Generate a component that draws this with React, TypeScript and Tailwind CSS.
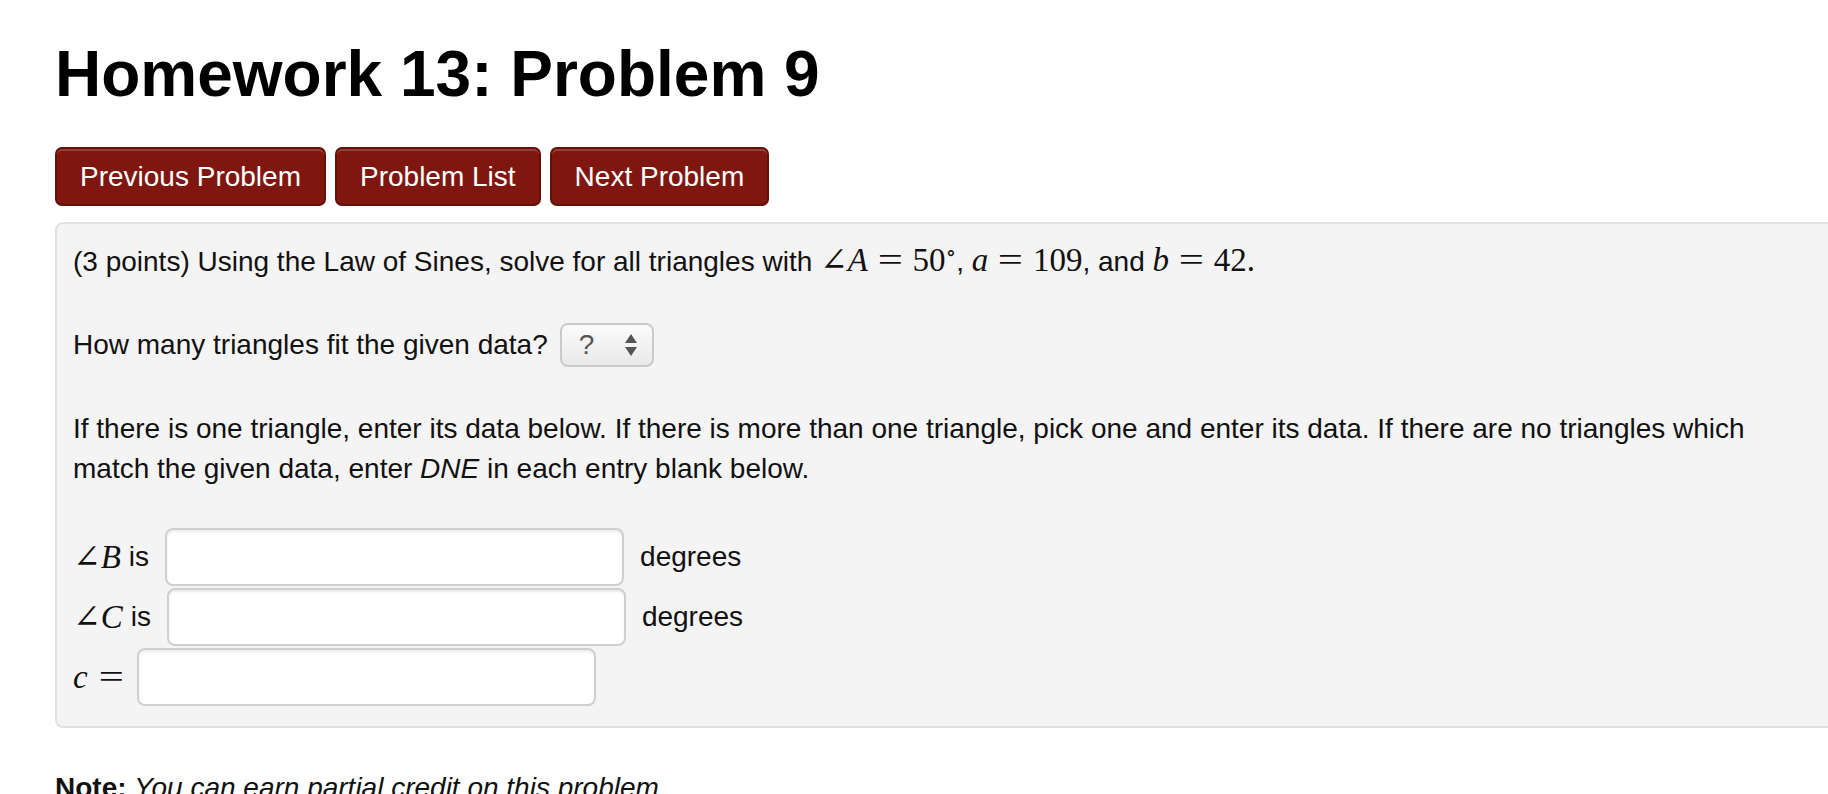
import React from 'react';

const math = "font-['Liberation_Serif','DejaVu_Serif',serif] text-[33px] leading-none";

const Eq: React.FC = () => (
  <span className="mx-[13px] inline-block scale-x-[1.35] font-['Liberation_Serif','DejaVu_Serif',serif]">=</span>
);

const AnswerBox: React.FC<{ className?: string }> = ({ className = '' }) => (
  <input
    type="text"
    className={`h-[58px] w-[459px] rounded-[8px] border-2 border-[#cfcfcf] bg-white px-3 shadow-[inset_0_2px_2px_rgba(0,0,0,0.08)] outline-none ${className}`}
  />
);

const App: React.FC = () => {
  const buttons = ['Previous Problem', 'Problem List', 'Next Problem'];

  return (
    <div className="min-h-[794px] w-full overflow-hidden bg-white font-['Liberation_Sans',Arial,sans-serif] text-[28px] leading-[40px] text-[#111]">
      <div className="pl-[55px] pt-[39px]">
        <h1 className="text-[64px] font-bold leading-[70px] text-black">Homework 13: Problem 9</h1>

        {/* Problem navigation */}
        <div className="mt-[38px] flex gap-[9px]">
          {buttons.map((b) => (
            <button
              key={b}
              className="flex h-[59px] items-center rounded-[7px] border-2 border-[#651009] bg-[#7f1710] px-[23px] text-[28px] text-white shadow-[inset_0_2px_0_rgba(255,255,255,0.18)]"
            >
              {b}
            </button>
          ))}
        </div>

        {/* Problem body */}
        <div className="mt-[16px] w-[1840px] rounded-[8px] border-2 border-[#e1e1e1] bg-[#f4f4f4] pb-[20px] pl-[16px] pr-[102px] pt-[18px]">
          <p className="h-[40px] whitespace-nowrap">
            (3 points) Using the Law of Sines, solve for all triangles with{' '}
            <span className={math}>
              ∠<i>A</i>
              <Eq />
              50<sup className="text-[22px]">∘</sup>
            </span>
            ,{' '}
            <span className={math}>
              <i>a</i>
              <Eq />
              109
            </span>
            , and{' '}
            <span className={math}>
              <i>b</i>
              <Eq />
              42.
            </span>
          </p>

          <div className="mt-[41px] flex h-[44px] items-center">
            <span>How many triangles fit the given data?</span>
            <span className="ml-[12px] flex h-[44px] w-[94px] items-center justify-between rounded-[8px] border-2 border-[#cacaca] bg-gradient-to-b from-[#fbfbfb] to-[#e9e9e9] pl-[17px] pr-[14px] text-[#555]">
              <span>?</span>
              <svg width="14" height="24" viewBox="0 0 14 24" fill="#555">
                <path d="M7 1 L13 10 L1 10 Z" />
                <path d="M7 23 L13 14 L1 14 Z" />
              </svg>
            </span>
          </div>

          <p className="mt-[42px] max-w-[1722px]">
            If there is one triangle, enter its data below. If there is more than one triangle, pick one and enter its data. If
            there are no triangles which match the given data, enter <i>DNE</i> in each entry blank below.
          </p>

          <div className="mt-[39px] flex flex-col gap-[2px]">
            <div className="flex h-[58px] items-center">
              <span className={math}>
                ∠<i>B</i>
              </span>
              <span className="ml-[8px] mr-[16px]">is</span>
              <AnswerBox />
              <span className="ml-[16px]">degrees</span>
            </div>
            <div className="flex h-[58px] items-center">
              <span className={math}>
                ∠<i>C</i>
              </span>
              <span className="ml-[8px] mr-[16px]">is</span>
              <AnswerBox />
              <span className="ml-[16px]">degrees</span>
            </div>
            <div className="flex h-[58px] items-center">
              <span className={math}>
                <i>c</i>
                <span className="ml-[14px] mr-[17px] inline-block scale-x-[1.35]">=</span>
              </span>
              <AnswerBox />
            </div>
          </div>
        </div>

        <p className="mt-[40px]">
          <b>Note:</b> <i>You can earn partial credit on this problem.</i>
        </p>
      </div>
    </div>
  );
};

export default App;
